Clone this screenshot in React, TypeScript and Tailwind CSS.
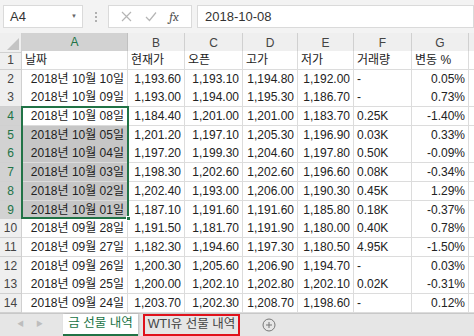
import React from 'react';

const font = { fontFamily: '"Liberation Sans", "Noto Sans CJK KR", sans-serif' };

const cols = ['A', 'B', 'C', 'D', 'E', 'F', 'G'];

const rows: string[][] = [
  ['날짜', '현재가', '오픈', '고가', '저가', '거래량', '변동 %'],
  ['2018년 10월 10일', '1,193.60', '1,193.10', '1,194.80', '1,192.00', '-', '0.05%'],
  ['2018년 10월 09일', '1,193.00', '1,194.00', '1,195.30', '1,186.70', '-', '0.73%'],
  ['2018년 10월 08일', '1,184.40', '1,201.00', '1,201.00', '1,183.70', '0.25K', '-1.40%'],
  ['2018년 10월 05일', '1,201.20', '1,197.10', '1,205.30', '1,196.90', '0.03K', '0.33%'],
  ['2018년 10월 04일', '1,197.20', '1,199.30', '1,204.60', '1,197.80', '0.50K', '-0.09%'],
  ['2018년 10월 03일', '1,198.30', '1,202.60', '1,202.60', '1,196.60', '0.08K', '-0.34%'],
  ['2018년 10월 02일', '1,202.40', '1,193.00', '1,206.00', '1,190.30', '0.45K', '1.29%'],
  ['2018년 10월 01일', '1,187.10', '1,191.60', '1,191.60', '1,185.80', '0.18K', '-0.37%'],
  ['2018년 09월 28일', '1,191.50', '1,181.70', '1,191.90', '1,180.00', '0.40K', '0.78%'],
  ['2018년 09월 27일', '1,182.30', '1,194.60', '1,197.30', '1,180.50', '4.95K', '-1.50%'],
  ['2018년 09월 26일', '1,200.30', '1,205.60', '1,206.90', '1,194.70', '-', '0.03%'],
  ['2018년 09월 25일', '1,200.00', '1,202.10', '1,202.80', '1,202.10', '0.02K', '-0.31%'],
  ['2018년 09월 24일', '1,203.70', '1,202.30', '1,208.70', '1,198.60', '-', '0.12%'],
];

const gridCols = 'grid grid-cols-[22px_106px_57px_58px_55px_56px_58px_57px_1fr]';

function FormulaBar() {
  return (
    <div className="flex h-[33px] items-center bg-[#f3f3f3] pl-[3px]">
      <div className="flex h-[23px] w-[80px] items-center justify-between border border-[#dadada] bg-white pl-[6px] pr-[5px] text-[13px] text-[#333]">
        <span>A4</span>
        <span className="text-[6px] text-[#666]">▼</span>
      </div>
      <div className="flex w-[25px] flex-col items-center gap-[2px]">
        <span className="h-[2px] w-[2px] rounded-full bg-[#9a9a9a]" />
        <span className="h-[2px] w-[2px] rounded-full bg-[#9a9a9a]" />
        <span className="h-[2px] w-[2px] rounded-full bg-[#9a9a9a]" />
      </div>
      <div className="flex h-[23px] w-[84px] items-center justify-around border border-[#dadada] bg-white px-[6px] text-[#a8a8a8]">
        <svg width="11" height="11" viewBox="0 0 11 11">
          <path d="M1 1 L10 10 M10 1 L1 10" stroke="#b5b5b5" strokeWidth="1.2" />
        </svg>
        <svg width="12" height="11" viewBox="0 0 12 11">
          <path d="M1 6 L4.5 9.5 L11 1.5" stroke="#b5b5b5" strokeWidth="1.2" fill="none" />
        </svg>
        <span className="font-serif text-[13px] italic text-[#555]">fx</span>
      </div>
      <div className="ml-[5px] flex h-[23px] flex-1 items-center border border-[#dadada] bg-white pl-[7px] text-[13px] text-[#333]">
        2018-10-08
      </div>
    </div>
  );
}

function HeaderRow() {
  return (
    <div className={`${gridCols} h-[18px] bg-[#efefef] text-[12px] text-[#444]`}>
      <div className="relative border-r border-b border-[#d0d0d0]">
        <svg className="absolute right-[2px] bottom-[2px]" width="12" height="12" viewBox="0 0 12 12">
          <path d="M12 0 L12 12 L0 12 Z" fill="#c4c4c4" />
        </svg>
      </div>
      {cols.map((c) => (
        <div
          key={c}
          className={`flex items-center justify-center border-r ${
            c === 'A'
              ? 'border-b-2 border-b-[#217346] border-r-[#c0c0c0] bg-[#d2d2d2] text-[#217346]'
              : 'border-b border-[#d0d0d0]'
          }`}
        >
          {c}
        </div>
      ))}
      <div className="border-b border-[#d0d0d0]" />
    </div>
  );
}

function DataRow({ cells, index }: { cells: string[]; index: number }) {
  const n = index + 1;
  const selected = n >= 4 && n <= 9;
  return (
    <div className={`${gridCols} h-[18.7px] text-[12px] text-[#222]`}>
      <div
        className={`flex items-center justify-center border-r border-b border-[#d0d0d0] ${
          selected ? 'bg-[#d2d2d2] text-[#217346]' : 'bg-[#efefef] text-[#444]'
        }`}
      >
        {n}
      </div>
      {cells.map((v, i) => {
        const header = n === 1;
        const left = header || i === 5;
        const shaded = i === 0 && n >= 5 && n <= 9;
        return (
          <div
            key={i}
            className={`flex items-center overflow-hidden whitespace-nowrap border-r border-b border-[#dcdcdc] px-[3px] ${
              left ? 'justify-start' : 'justify-end'
            } ${shaded ? 'bg-[#c6c6c6]' : 'bg-white'}`}
          >
            {v}
          </div>
        );
      })}
      <div className="border-b border-[#dcdcdc] bg-white" />
    </div>
  );
}

function SheetTabs() {
  return (
    <div className="flex h-[23px] items-stretch whitespace-nowrap border-t border-[#c8c8c8] bg-[#e6e6e6] text-[12.5px]">
      <div className="flex w-[63px] items-center gap-[12px] pl-[17px] text-[7px] text-[#bdbdbd]">
        <span>◀</span>
        <span>▶</span>
      </div>
      <div className="flex w-[75px] items-center justify-center border-b-2 border-[#217346] bg-white text-[#217346] shadow-[1px_0_2px_rgba(0,0,0,0.2)]">
        금 선물 내역
      </div>
      <div className="ml-[5px] flex w-[97px] items-center justify-center border-2 border-[#e0121c] text-[#444]">
        WTI유 선물 내역
      </div>
      <div className="flex w-[58px] items-center justify-center">
        <svg width="14" height="14" viewBox="0 0 14 14">
          <circle cx="7" cy="7" r="6" fill="none" stroke="#777" strokeWidth="1" />
          <path d="M7 4 V10 M4 7 H10" stroke="#777" strokeWidth="1" />
        </svg>
      </div>
    </div>
  );
}

export default function App() {
  return (
    <div className="h-[336px] w-[474px] overflow-hidden bg-white" style={font}>
      <FormulaBar />
      <div className="relative">
        <HeaderRow />
        {rows.map((r, i) => (
          <DataRow key={i} cells={r} index={i} />
        ))}
        <div className="pointer-events-none absolute left-[21px] top-[73.1px] h-[113.2px] w-[108px] border-2 border-[#217346]">
          <span className="absolute -right-[4px] -bottom-[4px] h-[5px] w-[5px] border border-white bg-[#217346]" />
        </div>
      </div>
      <SheetTabs />
    </div>
  );
}
